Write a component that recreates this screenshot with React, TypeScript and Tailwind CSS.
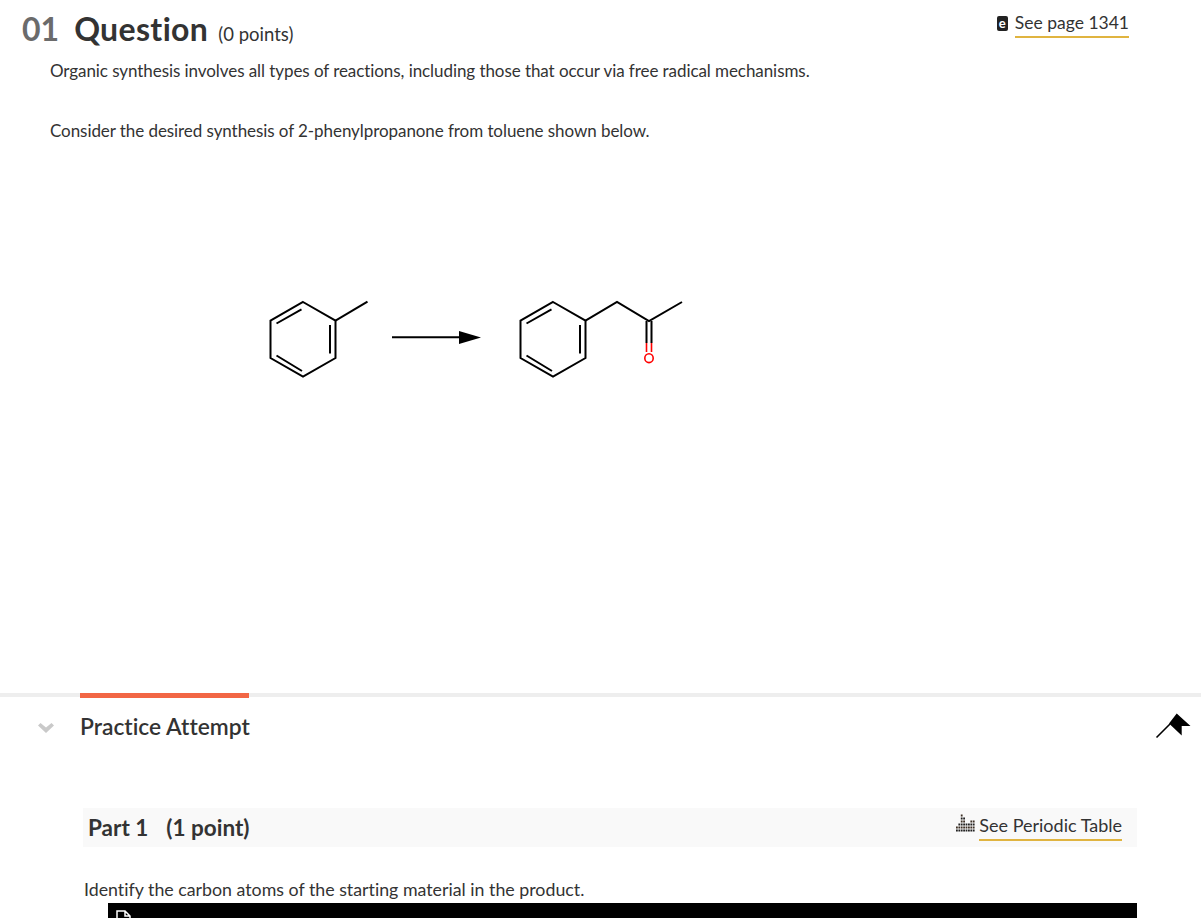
import React from 'react'

function Ring({ x }: { x: number }) {
  // x is the left edge of the hexagon
  return (
    <g>
      <polygon points={`${x + 32.5},302 ${x + 65},320.7 ${x + 65},358 ${x + 32.5},376.7 ${x},358 ${x},320.7`} fill="none" />
      <path d={`M${x + 6} 323.5L${x + 31} 309.3M${x + 59.5} 325V353.5M${x + 6} 355.5L${x + 31.5} 371`} />
    </g>
  )
}

function Reaction() {
  return (
    <svg width="1201" height="100" viewBox="0 290 1201 100" className="block">
      <g stroke="#000" strokeWidth="2" fill="none">
        <Ring x={270.5} />
        <path d="M335.5 320.7L367.5 301.7" />
        <path d="M392 337.3H460" />
        <Ring x={520.5} />
        <path d="M585.5 320.7L617 302L649 321L682 302" />
        <path d="M646.5 321V343M651.5 321V343" />
      </g>
      <polygon points="459,331 481,337.4 459,344" fill="#000" />
      <g stroke="#f00" strokeWidth="1.6" fill="none">
        <path d="M646.5 343V352M651.5 343V352" />
        <ellipse cx="649" cy="358.2" rx="4.2" ry="4.4" />
      </g>
    </svg>
  )
}

function PeriodicIcon() {
  const heights = [2, 3, 6, 5, 3, 3, 4, 4]
  return (
    <svg width="19" height="18" viewBox="0 0 19 18" className="shrink-0">
      {heights.map((h, col) =>
        Array.from({ length: h }).map((_, row) => (
          <rect key={`${col}-${row}`} x={col * 2.4} y={15.5 - row * 3} width="1.8" height="2" fill={row % 2 ? '#3d2f24' : '#222'} />
        ))
      )}
    </svg>
  )
}

export default function App() {
  return (
    <div className="h-screen overflow-hidden bg-white text-[#333] font-['Lato',sans-serif] [font-variant-ligatures:none]">
      {/* Question header */}
      <div className="flex justify-between pl-[22px] pr-[72px]">
        <h1 className="flex items-baseline pt-[8px] text-[32px] leading-[42px] font-bold">
          <span className="text-[#6b6b6b]">01</span>
          <span className="ml-[15px] tracking-[0.35px]">Question</span>
          <span className="ml-[10px] text-[18.5px] font-normal">(0 points)</span>
        </h1>
        <a className="mt-[11px] flex h-[27px] items-start">
          <span className="mt-[5px] mr-[7px] flex h-[15px] w-[11px] items-center justify-center rounded-[2px] bg-[#222] text-[13px] leading-none font-bold text-white">e</span>
          <span className="h-[27px] border-b-2 border-[#e0b440] pt-[1px] text-[17.5px] leading-[22px]">See page 1341</span>
        </a>
      </div>

      {/* Question text */}
      <div className="pl-[50px] text-[17px] leading-[24px] tracking-[-0.07px]">
        <p className="mt-[4px]">Organic synthesis involves all types of reactions, including those that occur via free radical mechanisms.</p>
        <p className="mt-[36px]">Consider the desired synthesis of 2-phenylpropanone from toluene shown below.</p>
      </div>

      <div className="mt-[147px]">
        <Reaction />
      </div>

      {/* Attempt tab */}
      <div className="mt-[303px] h-[4px] bg-[#eeeeee]">
        <div className="ml-[80px] h-[5px] w-[169px] bg-[#f26645]" />
      </div>
      <div className="flex items-center justify-between pt-[13px] pr-[10px] pl-[38px]">
        <div className="flex items-center">
          <svg width="16" height="10" viewBox="0 0 16 10" className="mt-[3px] mr-[26px]">
            <path d="M0 2.5L2.5 0L8 4.5L13.5 0L16 2.5L8 10Z" fill="#c9c9c9" />
          </svg>
          <h2 className="text-[22.8px] leading-[32px] font-semibold">Practice Attempt</h2>
        </div>
        <svg width="36" height="26" viewBox="1155 716 36 26">
          <path d="M1156.5 740.5L1170 727" stroke="#000" strokeWidth="1.6" />
          <polygon points="1176.7,716.5 1190.5,729 1181.7,729 1181.7,738.5 1169,726.5" fill="#000" />
        </svg>
      </div>

      {/* Part 1 */}
      <div className="mt-[66px] ml-[83px] mr-[64px] flex h-[39px] justify-between bg-[#f9f9f9] pl-[5px] pr-[15px]">
        <h3 className="text-[22.5px] leading-[39px] font-bold">
          Part 1<span className="ml-[18px]">(1 point)</span>
        </h3>
        <a className="mt-[4px] flex h-[29px] items-start">
          <span className="mt-[2px] mr-[4px]"><PeriodicIcon /></span>
          <span className="h-[29px] border-b-2 border-[#e0b440] pt-[1px] text-[18px] leading-[24px]">See Periodic Table</span>
        </a>
      </div>
      <p className="mt-[30px] ml-[84px] text-[17.8px] leading-[24px]">Identify the carbon atoms of the starting material in the product.</p>
      <div className="mt-[2px] ml-[108px] mr-[64px] h-[200px] bg-black pl-[8px] pt-[7px]">
        <svg width="15" height="12" viewBox="0 0 15 12">
          <path d="M1 12V1H9L14 6V12M9 1V6H14" fill="none" stroke="#fff" strokeWidth="1.5" />
        </svg>
      </div>
    </div>
  )
}
